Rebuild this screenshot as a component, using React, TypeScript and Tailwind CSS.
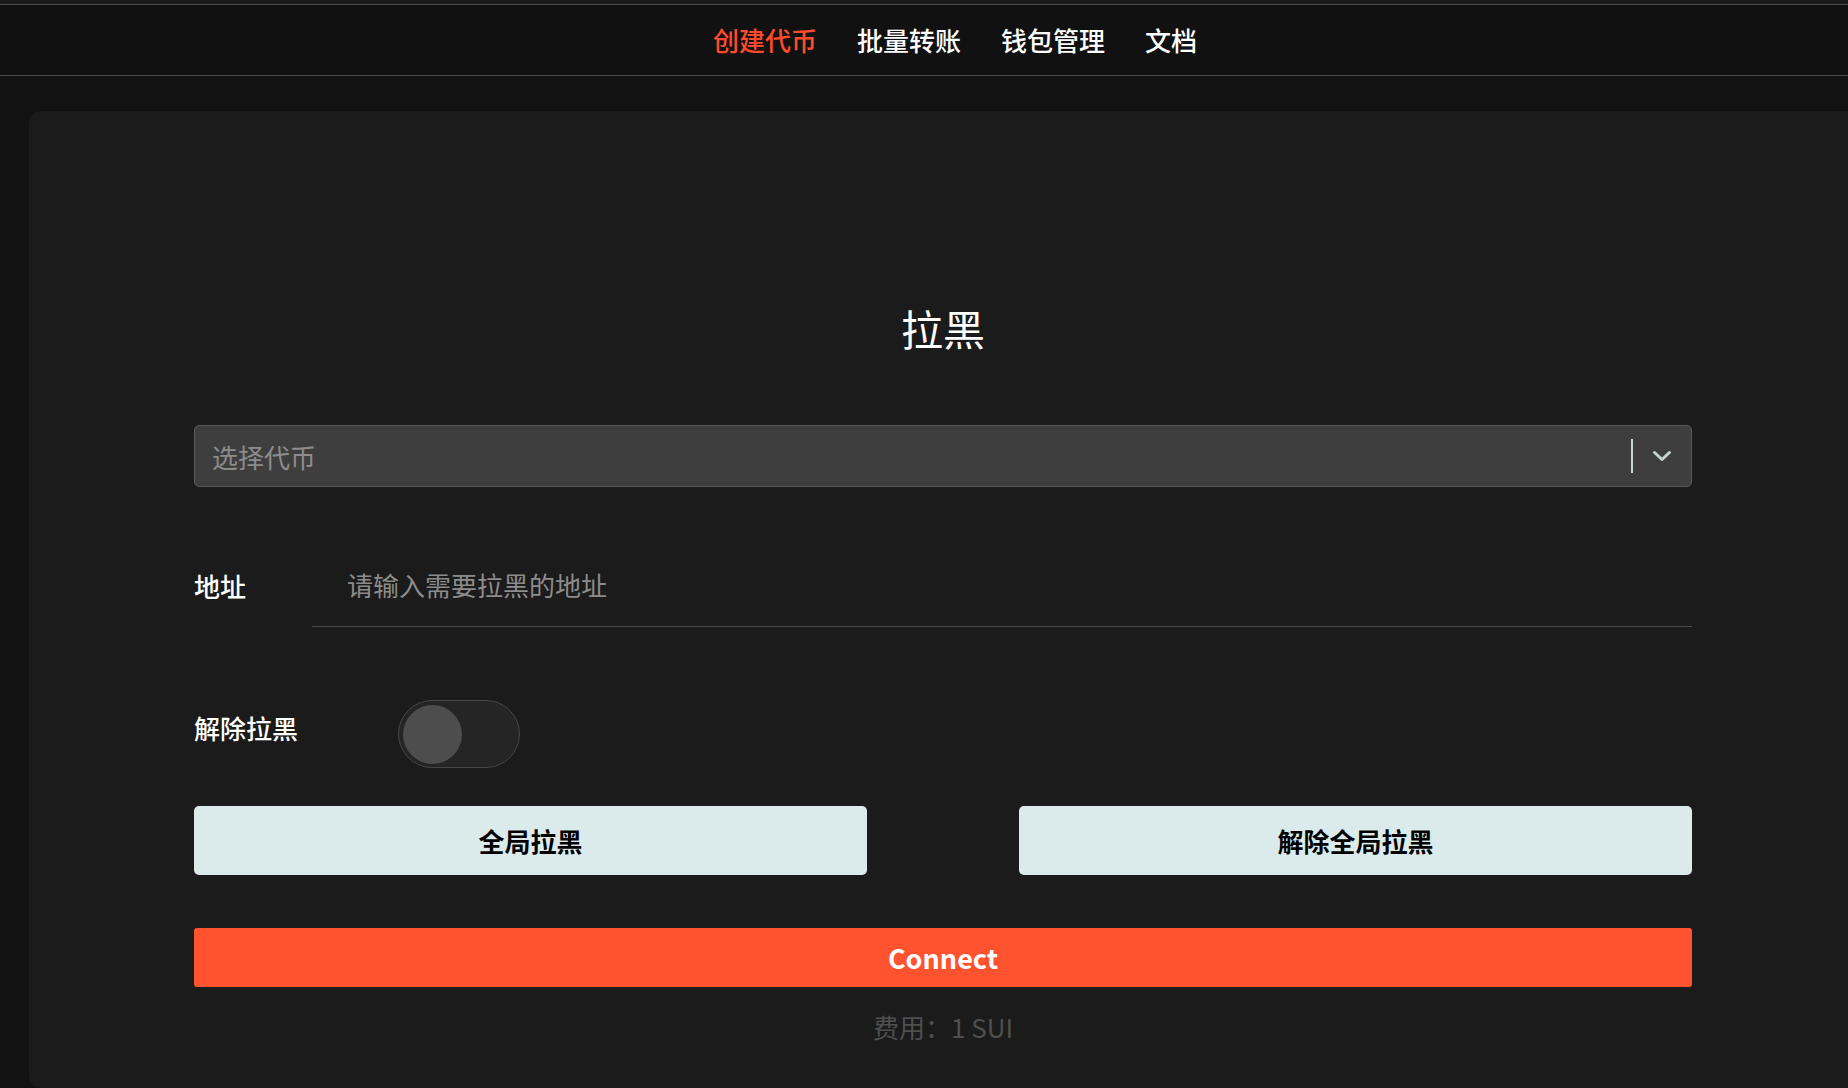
import React, { useState } from "react";

const font = { fontFamily: '"Noto Sans CJK SC", "Noto Sans", sans-serif' };

export default function App() {
  const [on, setOn] = useState(false);
  return (
    <div className="w-[1848px] h-[1088px] overflow-hidden bg-[#121212] text-white" style={font}>
      <div className="w-[1886px] h-full flex flex-col">
        <div className="h-[4px] bg-[#1b1b1b]" />
        <nav className="h-[72px] border-y border-[#4d4d4d] bg-[#111111] flex items-center justify-center gap-[40px] pl-[24px] text-[26px] font-medium leading-none">
          <span className="text-[#ff4b2b]">创建代币</span>
          <span>批量转账</span>
          <span>钱包管理</span>
          <span>文档</span>
        </nav>
        <div className="flex-1 px-[29px] pt-[35px]">
          <div className="h-full bg-[#1b1b1b] rounded-[12px] px-[165px] pt-[187px] flex flex-col">
            <h1 className="text-[42px] leading-[60px] text-center font-normal">拉黑</h1>
            <div className="mt-[67px] h-[62px] rounded-[5px] border border-[#595959] bg-[#3e3e3e] flex items-center">
              <span className="flex-1 pl-[17px] text-[26px] text-[#8c8c8c]">选择代币</span>
              <span className="w-[2px] h-[34px] bg-[#c9d2d2]" />
              <span className="w-[58px] flex items-center justify-center">
                <svg width="20" height="12" viewBox="0 0 20 12" fill="none">
                  <path d="M2.5 2.5 L10 9.5 L17.5 2.5" stroke="#c9d2d2" strokeWidth="3" strokeLinecap="round" strokeLinejoin="round" />
                </svg>
              </span>
            </div>
            <div className="mt-[69px] flex items-center h-[71px]">
              <span className="w-[118px] text-[26px] font-medium mb-[12px]">地址</span>
              <input
                className="flex-1 h-[71px] pb-[14px] pl-[35px] bg-transparent border-b border-[#4a4a4a] outline-none text-[26px] text-white placeholder:text-[#8c8c8c]"
                placeholder="请输入需要拉黑的地址"
                style={font}
              />
            </div>
            <div className="mt-[73px] flex items-center h-[68px]">
              <span className="w-[204px] text-[26px] font-medium mb-[14px]">解除拉黑</span>
              <button
                onClick={() => setOn(!on)}
                className="w-[122px] h-[68px] rounded-full border border-[#474747] bg-[#252525] flex items-center px-[4px]"
              >
                <span className={"w-[59px] h-[59px] rounded-full bg-[#4d4d4d] " + (on ? "ml-auto" : "")} />
              </button>
            </div>
            <div className="mt-[38px] flex justify-between">
              <button className="w-[673px] h-[69px] rounded-[5px] bg-[#dbebeb] text-black text-[26px] font-bold" style={font}>全局拉黑</button>
              <button className="w-[673px] h-[69px] rounded-[5px] bg-[#dbebeb] text-black text-[26px] font-bold" style={font}>解除全局拉黑</button>
            </div>
            <button className="mt-[53px] h-[59px] rounded-[3px] bg-[#ff522e] text-white text-[27px] leading-[36px] font-bold" style={font}>Connect</button>
            <p className="mt-[22px] text-center text-[26px] leading-[36px] text-[#4f4f4f]">费用：1 SUI</p>
          </div>
        </div>
      </div>
    </div>
  );
}
